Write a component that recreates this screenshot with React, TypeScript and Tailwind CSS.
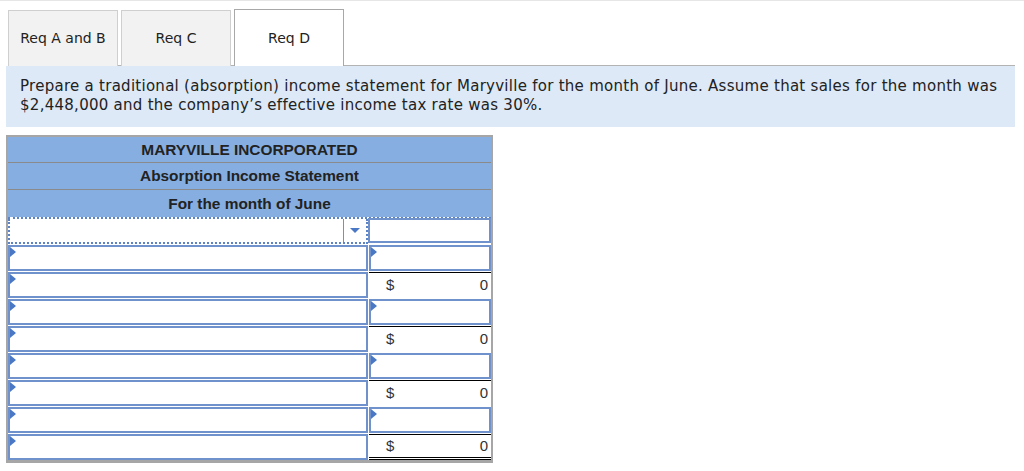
import React from "react";

const Marker = () => (
  <span className="absolute left-0 top-0 w-0 h-0 border-t-[5px] border-b-[5px] border-l-[6px] border-t-transparent border-b-transparent border-l-[#4a78c4]" />
);

const InputCell = () => (
  <div className="relative h-[26px] border-2 border-[#6f92cc] bg-white">
    <Marker />
  </div>
);

const TotalCell = ({ last }: { last?: boolean }) => (
  <div
    className={`h-[26px] bg-white border-t border-black flex items-center justify-between pl-[17px] pr-[3px] text-[15px] text-[#333] ${
      last ? "border-b-[3px] border-b-black border-double" : ""
    }`}
    style={{ fontFamily: '"Liberation Sans", Arial, sans-serif' }}
  >
    <span>$</span>
    <span>0</span>
  </div>
);

export default function App() {
  const verdana = { fontFamily: '"DejaVu Sans", Verdana, sans-serif' };
  const arial = { fontFamily: '"Liberation Sans", Arial, sans-serif' };
  const rows = [false, true, false, true, false, true, false, true];
  return (
    <div className="w-[1024px] h-[471px] bg-white overflow-hidden border-t border-[#e6e6e6]" style={verdana}>
      <div className="ml-2 mr-[9px] pt-2 flex items-end gap-[3px] border-b border-[#b3b3b3]">
        <div className="w-[110px] h-[56px] bg-[#f2f2f2] border border-[#cfcfcf] border-b-0 flex items-center justify-center text-[14px] text-[#222] -mb-px">
          Req A and B
        </div>
        <div className="w-[110px] h-[56px] bg-[#f2f2f2] border border-[#cfcfcf] border-b-0 flex items-center justify-center text-[14px] text-[#222] -mb-px">
          Req C
        </div>
        <div className="w-[110px] h-[57px] bg-white border border-[#a8a8a8] border-b-0 flex items-center justify-center text-[14px] text-[#222] relative z-10 -mb-px">
          Req D
        </div>
      </div>
      <div className="ml-[6px] mr-[9px] bg-[#dde9f7] px-[14px] pt-[11px] pb-[12px] text-[15px] leading-[19px] tracking-[0.27px] text-[#222]">
        Prepare a traditional (absorption) income statement for Maryville for the month of June. Assume that sales for the month was $2,448,000 and the company’s effective income tax rate was 30%.
      </div>
      <div className="ml-[6px] mt-[8px] w-[487px] border-2 border-[#a6a6a6] border-b-[3px]" style={arial}>
        <div className="bg-[#86aee1] text-[15.4px] font-bold text-[#222] text-center">
          <div className="h-[26px] flex items-center justify-center border-b border-[#8a8a8a]">MARYVILLE INCORPORATED</div>
          <div className="h-[27px] flex items-center justify-center border-b border-[#8a8a8a]">Absorption Income Statement</div>
          <div className="h-[27px] flex items-center justify-center">For the month of June</div>
        </div>
        <div className="bg-white">
          <div className="grid grid-cols-[360px_1fr] h-[27px] border-t-2 border-dotted border-[#5b83c5]">
            <div className="h-[25px] border-2 border-t-0 border-dotted border-[#5b83c5] flex bg-white">
              <div className="flex-1 border-r border-[#6f92cc]" />
              <div className="w-[22px] flex items-center justify-center">
                <span className="w-0 h-0 border-l-[5px] border-r-[5px] border-t-[5px] border-l-transparent border-r-transparent border-t-[#4a78c4]" />
              </div>
            </div>
            <div className="relative h-[25px] border-2 border-[#6f92cc] bg-white -mt-[1px]" />
          </div>
          {rows.map((total, i) => (
            <div key={i} className="grid grid-cols-[360px_1fr] h-[27px] pt-px gap-x-[1px]">
              <InputCell />
              {total ? <TotalCell last={i === rows.length - 1} /> : <InputCell />}
            </div>
          ))}
        </div>
      </div>
    </div>
  );
}
